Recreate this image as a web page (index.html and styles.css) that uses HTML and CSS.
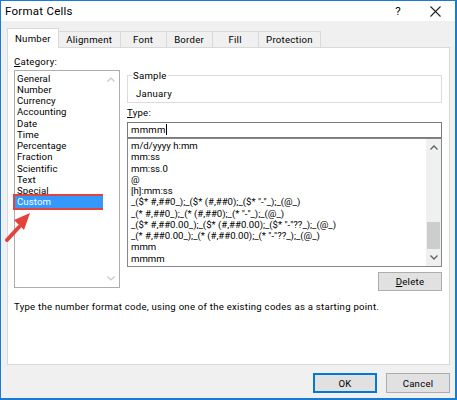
FILE: index.html
```html
<!DOCTYPE html>
<html>
<head>
<meta charset="utf-8">
<link rel="stylesheet" href="styles.css">
</head>
<body>
<div class="dialog">
  <div class="titlebar">
    <span class="title">Format Cells</span>
    <span class="help">?</span>
    <span class="close">
      <svg width="11" height="11" viewBox="0 0 11 11"><path d="M0.5 0.5 L10.5 10.5 M10.5 0.5 L0.5 10.5" stroke="#222" stroke-width="1.1" fill="none"/></svg>
    </span>
  </div>
  <div class="main">
    <div class="tabs">
      <div class="tab active">Number</div>
      <div class="tab">Alignment</div>
      <div class="tab">Font</div>
      <div class="tab">Border</div>
      <div class="tab">Fill</div>
      <div class="tab">Protection</div>
    </div>
    <div class="panel">
      <div class="cols">
        <div class="left">
          <div class="label"><u>C</u>ategory:</div>
          <div class="catbox">
            <ul class="list catlist">
              <li>General</li>
              <li>Number</li>
              <li>Currency</li>
              <li>Accounting</li>
              <li>Date</li>
              <li>Time</li>
              <li>Percentage</li>
              <li>Fraction</li>
              <li>Scientific</li>
              <li>Text</li>
              <li>Special</li>
              <li class="sel">Custom</li>
            </ul>
            <div class="vscroll disabled">
              <div class="arrowbtn"><svg width="8" height="5" viewBox="0 0 8 5"><path d="M0.5 4.5 L4 1 L7.5 4.5" stroke="currentColor" stroke-width="1.2" fill="none"/></svg></div>
              <div class="track"></div>
              <div class="arrowbtn"><svg width="8" height="5" viewBox="0 0 8 5"><path d="M0.5 0.5 L4 4 L7.5 0.5" stroke="currentColor" stroke-width="1.2" fill="none"/></svg></div>
            </div>
          </div>
        </div>
        <div class="right">
          <fieldset class="sample">
            <legend>Sample</legend>
            <div class="sample-text">January</div>
          </fieldset>
          <div class="label type-label"><u>T</u>ype:</div>
          <div class="typeinput">mmmm<span class="caret"></span></div>
          <div class="typebox">
            <ul class="list typelist">
              <li>m/d/yyyy h:mm</li>
              <li>mm:ss</li>
              <li>mm:ss.0</li>
              <li>@</li>
              <li>[h]:mm:ss</li>
              <li>_($* #,##0_);_($* (#,##0);_($* "-"_);_(@_)</li>
              <li>_(* #,##0_);_(* (#,##0);_(* "-"_);_(@_)</li>
              <li>_($* #,##0.00_);_($* (#,##0.00);_($* "-"??_);_(@_)</li>
              <li>_(* #,##0.00_);_(* (#,##0.00);_(* "-"??_);_(@_)</li>
              <li>mmm</li>
              <li>mmmm</li>
            </ul>
            <div class="vscroll">
              <div class="arrowbtn"><svg width="8" height="5" viewBox="0 0 8 5"><path d="M0.5 4.5 L4 1 L7.5 4.5" stroke="currentColor" stroke-width="1.3" fill="none"/></svg></div>
              <div class="track"><div class="thumb"></div></div>
              <div class="arrowbtn"><svg width="8" height="5" viewBox="0 0 8 5"><path d="M0.5 0.5 L4 4 L7.5 0.5" stroke="currentColor" stroke-width="1.3" fill="none"/></svg></div>
            </div>
          </div>
          <div class="delrow"><button class="btn del"><u>D</u>elete</button></div>
        </div>
      </div>
      <p class="desc">Type the number format code, using one of the existing codes as a starting point.</p>
    </div>
    <div class="footer">
      <button class="btn ok">OK</button>
      <button class="btn">Cancel</button>
    </div>
  </div>
  <svg class="pointer" width="40" height="40" viewBox="0 0 40 40">
    <path d="M7 38 L19 25" stroke="#e3433c" stroke-width="4" stroke-linecap="round"/>
    <path d="M30 11 L14 18 L24 28 Z" fill="#e3433c"/>
  </svg>
</div>
</body>
</html>
```

FILE: styles.css
```css
* { box-sizing: border-box; }
body {
  margin: 0;
  font-family: Roboto, "Noto Sans", sans-serif;
  font-size: 9.6px;
  letter-spacing: 0.25px;
  color: #000;
}
.dialog {
  position: relative;
  width: 457px;
  height: 400px;
  border: 1px solid #1b7bd3;
  border-right-width: 2px;
  border-bottom-width: 2px;
  background: #f0f0f0;
  display: flex;
  flex-direction: column;
}
.titlebar {
  height: 20px;
  background: #fff;
  display: flex;
  align-items: center;
  padding-left: 4px;
  font-size: 11.5px;
}
.title { flex: 1; }
.help { width: 20px; text-align: center; font-size: 11.5px; margin-right: 22px; }
.close { width: 12px; margin-right: 13px; display: flex; }
.main {
  flex: 1;
  padding: 7px 5px 0 6px;
  display: flex;
  flex-direction: column;
}
.tabs {
  display: flex;
  align-items: flex-end;
  height: 19px;
}
.tab {
  height: 16px;
  line-height: 15px;
  padding: 0 7.5px;
  min-width: 47px;
  text-align: center;
  border: 1px solid #d9d9d9;
  border-bottom: none;
  margin-left: -1px;
  background: #f0f0f0;
}
.tab:first-child { margin-left: 0; }
.tab.active {
  height: 20px;
  line-height: 19px;
  margin-bottom: -1px;
  background: #fff;
  position: relative;
  z-index: 1;
  padding: 0 7px;
}
.panel {
  height: 318px;
  background: #fff;
  border: 1px solid #d9d9d9;
  padding: 8px 7px 0 6px;
}
.cols { display: flex; gap: 7px; }
.left { width: 106px; }
.right { flex: 1; display: flex; flex-direction: column; }
.label { line-height: 11px; height: 11px; }
.catbox {
  margin-top: 3px;
  height: 218px;
  border: 1px solid #adadad;
  display: flex;
}
.list {
  list-style: none;
  margin: 0;
  flex: 1;
  line-height: 11.25px;
  white-space: nowrap;
}
.catlist { padding: 1.5px 0 0 0; letter-spacing: 0.1px; }
.catlist li { padding-left: 2px; }
.catlist li.sel {
  background: #3399ff;
  color: #fff;
  outline: 2px solid #e3433c;
}
.typelist { overflow: hidden; padding: 1.5px 0 0 3px; letter-spacing: 0; }
.vscroll {
  width: 15px;
  display: flex;
  flex-direction: column;
  background: #f0f0f0;
  color: #606060;
}
.vscroll.disabled { background: #fff; color: #c6c6c6; width: 16px; }
.arrowbtn {
  height: 17px;
  display: flex;
  align-items: center;
  justify-content: center;
}
.track { flex: 1; display: flex; flex-direction: column; justify-content: flex-end; }
.thumb { height: 27px; background: #cdcdcd; margin: 0 1px; }
.sample {
  margin: 13.5px 0 0 0;
  border: 1px solid #dcdcdc;
  padding: 7px 8px 3px 8px;
  min-width: 0;
}
.sample legend {
  padding: 0 1px;
  margin-left: -4px;
  line-height: 11px;
}
.sample-text { line-height: 11px; }
.type-label { margin-top: 4.5px; }
.typeinput {
  margin-top: 3.5px;
  height: 16px;
  border: 1px solid #7a7a7a;
  padding-left: 3px;
  line-height: 14px;
  display: flex;
  align-items: center;
}
.caret { width: 1px; height: 11px; background: #000; }
.typebox {
  height: 129px;
  border: 1px solid #828790;
  display: flex;
}
.delrow { display: flex; justify-content: flex-end; margin-top: 5px; }
.btn {
  font: inherit;
  letter-spacing: inherit;
  color: #000;
  background: #e1e1e1;
  border: 1px solid #adadad;
  width: 64px;
  height: 19px;
  padding: 0;
  line-height: 17px;
}
.desc { margin: 10.5px 0 0 0; line-height: 11px; }
.footer {
  display: flex;
  justify-content: flex-end;
  gap: 9px;
  padding-top: 8px;
}
.footer .btn { height: 20px; }
.btn.ok { border-color: #0078d7; box-shadow: inset 0 0 0 1px #0078d7; }
.pointer {
  position: absolute;
  left: -1px;
  top: 201px;
}
```
